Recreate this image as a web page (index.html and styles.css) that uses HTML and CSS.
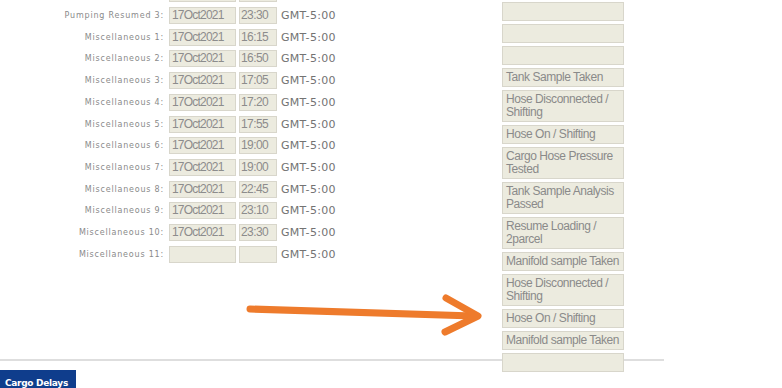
FILE: index.html
```html
<!DOCTYPE html>
<html>
<head>
<meta charset="utf-8">
<link rel="stylesheet" href="styles.css">
</head>
<body>
<div class="page">
  <div class="main">
    <div class="times">
      <div class="row"><span class="label"></span><span class="date"></span><span class="time"></span><span class="tz"></span></div>
      <div class="row"><span class="label">Pumping Resumed 3:</span><span class="date">17Oct2021</span><span class="time">23:30</span><span class="tz">GMT-5:00</span></div>
      <div class="row"><span class="label">Miscellaneous 1:</span><span class="date">17Oct2021</span><span class="time">16:15</span><span class="tz">GMT-5:00</span></div>
      <div class="row"><span class="label">Miscellaneous 2:</span><span class="date">17Oct2021</span><span class="time">16:50</span><span class="tz">GMT-5:00</span></div>
      <div class="row"><span class="label">Miscellaneous 3:</span><span class="date">17Oct2021</span><span class="time">17:05</span><span class="tz">GMT-5:00</span></div>
      <div class="row"><span class="label">Miscellaneous 4:</span><span class="date">17Oct2021</span><span class="time">17:20</span><span class="tz">GMT-5:00</span></div>
      <div class="row"><span class="label">Miscellaneous 5:</span><span class="date">17Oct2021</span><span class="time">17:55</span><span class="tz">GMT-5:00</span></div>
      <div class="row"><span class="label">Miscellaneous 6:</span><span class="date">17Oct2021</span><span class="time">19:00</span><span class="tz">GMT-5:00</span></div>
      <div class="row"><span class="label">Miscellaneous 7:</span><span class="date">17Oct2021</span><span class="time">19:00</span><span class="tz">GMT-5:00</span></div>
      <div class="row"><span class="label">Miscellaneous 8:</span><span class="date">17Oct2021</span><span class="time">22:45</span><span class="tz">GMT-5:00</span></div>
      <div class="row"><span class="label">Miscellaneous 9:</span><span class="date">17Oct2021</span><span class="time">23:10</span><span class="tz">GMT-5:00</span></div>
      <div class="row"><span class="label">Miscellaneous 10:</span><span class="date">17Oct2021</span><span class="time">23:30</span><span class="tz">GMT-5:00</span></div>
      <div class="row"><span class="label">Miscellaneous 11:</span><span class="date"></span><span class="time"></span><span class="tz">GMT-5:00</span></div>
    </div>
    <div class="events">
      <div class="ev"></div>
      <div class="ev"></div>
      <div class="ev"></div>
      <div class="ev">Tank Sample Taken</div>
      <div class="ev">Hose Disconnected / Shifting</div>
      <div class="ev">Hose On / Shifting</div>
      <div class="ev">Cargo Hose Pressure Tested</div>
      <div class="ev">Tank Sample Analysis Passed</div>
      <div class="ev">Resume Loading / 2parcel</div>
      <div class="ev">Manifold sample Taken</div>
      <div class="ev">Hose Disconnected / Shifting</div>
      <div class="ev">Hose On / Shifting</div>
      <div class="ev">Manifold sample Taken</div>
      <div class="ev"></div>
    </div>
    <div class="sep"></div>
  </div>
  <div class="tabs"><span class="tab">Cargo Delays</span></div>
  <svg class="arrow" width="782" height="388" viewBox="0 0 782 388">
    <line x1="250" y1="309" x2="474" y2="316" />
    <polyline points="446,298 478,316 445,332" />
  </svg>
</div>
</body>
</html>
```
FILE: styles.css
```css
html, body {
  margin: 0;
  padding: 0;
  background: #ffffff;
}
.page {
  width: 782px;
  height: 388px;
  overflow: hidden;
  position: relative;
}
.main {
  display: grid;
  grid-template-columns: 502px 122px 1fr;
  grid-template-rows: 359px 2px;
}
.times {
  grid-column: 1;
  grid-row: 1;
  margin-top: -14.73px;
  display: flex;
  flex-direction: column;
  gap: 4.73px;
}
.row {
  display: flex;
  align-items: center;
  height: 17px;
}
.label {
  width: 164px;
  text-align: right;
  font-family: "DejaVu Sans", sans-serif;
  font-size: 8px;
  letter-spacing: 0.8px;
  color: #8a8a8a;
  white-space: nowrap;
}
.date, .time {
  box-sizing: border-box;
  height: 17px;
  border: 1px solid #d8d6cb;
  background: #ecebdf;
  font-family: "Liberation Sans", Arial, sans-serif;
  font-size: 12px;
  line-height: 15px;
  color: #8c8c8c;
  white-space: nowrap;
  overflow: hidden;
}
.date {
  width: 67px;
  margin-left: 5px;
  padding-left: 2px;
  letter-spacing: -0.8px;
}
.time {
  width: 38px;
  margin-left: 3px;
  padding-left: 1px;
  letter-spacing: -0.6px;
}
.tz {
  margin-left: 4px;
  font-family: "DejaVu Sans", sans-serif;
  font-size: 11px;
  letter-spacing: 0.3px;
  color: #737373;
  white-space: nowrap;
}
.events {
  grid-column: 2;
  grid-row: 1;
  margin-top: 2px;
  display: flex;
  flex-direction: column;
  gap: 3px;
  align-self: start;
  z-index: 1;
}
.ev {
  box-sizing: border-box;
  min-height: 19px;
  border: 1px solid #d8d6cb;
  background: #ecebdf;
  padding: 2px 3px;
  font-family: "Liberation Sans", Arial, sans-serif;
  font-size: 12px;
  line-height: 13px;
  letter-spacing: -0.45px;
  color: #8a8a8a;
}
.sep {
  grid-column: 1 / 4;
  grid-row: 2;
  width: 664px;
  border-top: 2px solid #dedede;
}
.tabs {
  margin-top: 9px;
  display: flex;
}
.tab {
  display: block;
  width: 76px;
  box-sizing: border-box;
  padding: 7px 0 4px 5px;
  background: #0f3d8c;
  color: #ffffff;
  font-family: "DejaVu Sans", sans-serif;
  font-weight: bold;
  font-size: 9px;
  line-height: 12px;
  letter-spacing: -0.3px;
  white-space: nowrap;
}
.arrow {
  position: absolute;
  left: 0;
  top: 0;
  pointer-events: none;
  fill: none;
  stroke: #ee7b2c;
  stroke-width: 7;
  stroke-linecap: round;
  stroke-linejoin: round;
}
```
